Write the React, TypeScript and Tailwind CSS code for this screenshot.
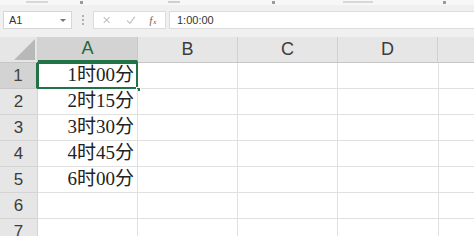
import React from "react";

const cols = ["A", "B", "C", "D"];
const rows = [
  { n: 1, v: "1时00分" },
  { n: 2, v: "2时15分" },
  { n: 3, v: "3时30分" },
  { n: 4, v: "4时45分" },
  { n: 5, v: "6时00分" },
  { n: 6, v: "" },
  { n: 7, v: "" },
];

const sans = { fontFamily: '"Liberation Sans", Arial, "Noto Sans CJK SC", sans-serif' };
const serif = { fontFamily: '"Liberation Serif", "Noto Sans CJK SC", serif' };

export default function App() {
  return (
    <div className="w-[474px] h-[236px] overflow-hidden bg-[#f0f0f0] select-none" style={sans}>
      {/* ribbon bottom edge */}
      <div className="h-[5px] bg-[#f7f7f7] flex items-start text-[0px]">
        <span className="ml-[26px] mt-[1px] w-[22px] h-[2px] bg-[#d8d8d8]" />
        <span className="ml-[32px] mt-[1px] w-[3px] h-[3px] bg-[#9a9a9a]" />
        <span className="ml-[85px] mt-[1px] w-[12px] h-[2px] bg-[#d0d0d0]" />
        <span className="ml-[92px] mt-[1px] w-[3px] h-[3px] bg-[#9a9a9a]" />
        <span className="ml-[68px] mt-[1px] w-[30px] h-[2px] bg-[#d8d8d8]" />
        <span className="ml-[70px] mt-[1px] w-[3px] h-[3px] bg-[#9a9a9a]" />
      </div>

      {/* formula bar */}
      <div className="h-[32px] flex items-start pt-[6px] pl-[3px]">
        <div className="w-[69px] h-[18px] bg-white border border-[#d6d6d6] flex items-center justify-between px-[5px] text-[11px] text-[#333]">
          <span>A1</span>
          <span className="w-0 h-0 border-l-[3px] border-r-[3px] border-t-[3px] border-l-transparent border-r-transparent border-t-[#777]" />
        </div>
        <div className="w-[21px] flex flex-col items-center justify-center gap-[2px] h-[18px]">
          <span className="w-[2px] h-[2px] bg-[#b0b0b0]" />
          <span className="w-[2px] h-[2px] bg-[#b0b0b0]" />
          <span className="w-[2px] h-[2px] bg-[#b0b0b0]" />
        </div>
        <div className="w-[73px] h-[18px] bg-white border border-[#dcdcdc] flex items-center text-[#c4c4c4]">
          <svg width="73" height="18" viewBox="0 0 73 18">
            <path d="M10 6 L16 12 M16 6 L10 12" stroke="#c2c2c2" strokeWidth="1.2" fill="none" />
            <path d="M34 9.5 L37 12.5 L42 5.5" stroke="#c2c2c2" strokeWidth="1.2" fill="none" />
            <text x="57" y="13" fontSize="10" fontStyle="italic" fill="#555" fontFamily="Liberation Serif, serif">f</text>
            <text x="61" y="13.5" fontSize="7" fontStyle="italic" fill="#555" fontFamily="Liberation Serif, serif">x</text>
          </svg>
        </div>
        <div className="ml-[3px] flex-1 h-[18px] bg-white border border-[#dcdcdc] border-r-0 flex items-center pl-[7px] text-[11px] text-[#333]">
          1:00:00
        </div>
      </div>

      {/* sheet */}
      <div className="bg-white">
        {/* column headers */}
        <div className="flex h-[26px] bg-[#e6e6e6] border-b border-[#c6c6c6]">
          <div className="w-[38px] shrink-0 relative border-r border-[#d0d0d0]">
            <span className="absolute right-[3px] bottom-[2px] w-0 h-0 border-l-[20px] border-t-[20px] border-l-transparent border-t-transparent border-b-0 border-r-0" />
            <svg className="absolute right-[2px] bottom-[2px]" width="21" height="21" viewBox="0 0 21 21">
              <path d="M21 0 L21 21 L0 21 Z" fill="#b8b8b8" />
            </svg>
          </div>
          {cols.map((c) => (
            <div
              key={c}
              className={
                c === "A"
                  ? "w-[100px] shrink-0 flex items-center justify-center bg-[#d3d3d3] border-r border-[#c8c8c8] border-b-2 border-b-[#217346] text-[18px] text-[#1d6a3d]"
                  : "w-[100px] shrink-0 flex items-center justify-center border-r border-[#d0d0d0] text-[18px] text-[#3c3c3c]"
              }
            >
              {c}
            </div>
          ))}
          <div className="flex-1" />
        </div>

        {/* rows */}
        {rows.map((r) => (
          <div key={r.n} className="flex h-[26px]">
            <div
              className={
                r.n === 1
                  ? "w-[38px] shrink-0 flex items-center justify-center bg-[#d3d3d3] border-r-2 border-r-[#217346] border-b border-[#c8c8c8] text-[17px] text-[#444]"
                  : "w-[38px] shrink-0 flex items-center justify-center bg-[#e6e6e6] border-r border-[#c6c6c6] border-b border-[#d4d4d4] text-[17px] text-[#3c3c3c]"
              }
            >
              {r.n}
            </div>
            <div className="w-[100px] shrink-0 relative flex items-center justify-end pr-[3px] border-r border-b border-[#e0e0e0] text-[19px] text-[#222]" style={serif}>
              {r.v}
              {r.n === 1 && (
                <>
                  <span className="absolute left-[-1px] top-[-1px] right-[-1px] bottom-[-1px] border-2 border-[#217346]" />
                  <span className="absolute right-[-4px] bottom-[-4px] w-[5px] h-[5px] bg-[#217346] border border-white" />
                </>
              )}
            </div>
            <div className="w-[100px] shrink-0 border-r border-b border-[#e0e0e0]" />
            <div className="w-[100px] shrink-0 border-r border-b border-[#e0e0e0]" />
            <div className="w-[101px] shrink-0 border-r border-b border-[#e0e0e0]" />
            <div className="flex-1 border-b border-[#e0e0e0]" />
          </div>
        ))}
      </div>
    </div>
  );
}
